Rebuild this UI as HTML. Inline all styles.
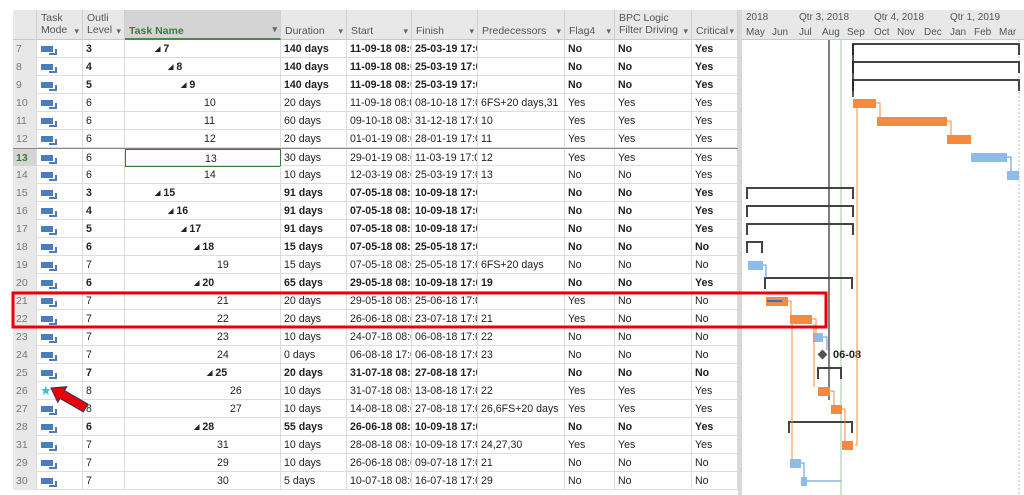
<!DOCTYPE html>
<html><head><meta charset="utf-8"><style>
*{margin:0;padding:0;box-sizing:border-box}
body{width:1024px;height:495px;background:#fff;position:relative;overflow:hidden;font-family:"Liberation Sans",sans-serif;font-size:10.6px;color:#222}
.hdr{position:absolute;top:10px;left:13px;height:30px;display:flex;background:#e8e8e8;border-bottom:1px solid #c8c8c8}
.hdr div{border-right:1px solid #d0d0d0;color:#555;font-size:10.5px;line-height:12px;padding:2px 3px 0 4px;position:relative;height:30px}
.hdr div.one{padding-top:15px}
.hdr .ar:after{content:"▾";position:absolute;right:3px;bottom:3px;font-size:9px;color:#666}
.row{position:absolute;left:13px;height:18px;display:flex;border-bottom:1px solid #dcdcdc}
.row div{height:18px;line-height:18px;border-right:1px solid #dcdcdc;padding-left:3px;white-space:nowrap;overflow:hidden}
.row div.n{background:#e8e8e8;color:#777;text-align:left;padding-left:3px;font-size:10.5px}
.b{font-weight:bold}
.t{font-size:7px;vertical-align:1px}
.ic{display:inline-block;width:12px;height:6px;background:#4a7cc2;margin-top:6px;margin-left:1px;position:relative}
.ic:after{content:"";position:absolute;right:-4px;top:3px;width:6px;height:4px;border-bottom:2px solid #4a7cc2;border-right:2px solid #4a7cc2}
.w0{width:24px}.w1{width:46px}.w2{width:42px}.w3{width:156px}.w4{width:66px}.w5{width:65px}.w6{width:66px}.w7{width:87px}.w8{width:50px}.w9{width:77px}.w10{width:46px}
</style></head><body>
<div class="hdr">
<div class="w0"></div>
<div class="w1 ar">Task<br>Mode</div>
<div class="w2 ar">Outli<br>Level</div>
<div class="w3 ar one" style="background:#d4d4d4;color:#3a7a3a;font-weight:bold;border-bottom:2px solid #4a8a4a">Task Name</div>
<div class="w4 ar one">Duration</div>
<div class="w5 ar one">Start</div>
<div class="w6 ar one">Finish</div>
<div class="w7 ar one">Predecessors</div>
<div class="w8 ar one">Flag4</div>
<div class="w9 ar">BPC Logic<br>Filter Driving</div>
<div class="w10 ar one">Critical</div>
</div>
<div style="position:absolute;left:738px;top:10px;width:4px;height:485px;background:#d8d8d8"></div>
<div style="position:absolute;left:742px;top:10px;width:282px;height:30px;background:#e8e8e8;border-bottom:1px solid #c8c8c8;font-size:10px;color:#555">
<span style="position:absolute;left:4px;top:2px">2018</span>
<span style="position:absolute;left:57px;top:2px">Qtr 3, 2018</span>
<span style="position:absolute;left:132px;top:2px">Qtr 4, 2018</span>
<span style="position:absolute;left:208px;top:2px">Qtr 1, 2019</span>
<span style="position:absolute;left:4px;top:17px">May</span><span style="position:absolute;left:30px;top:17px">Jun</span>
<span style="position:absolute;left:57px;top:17px">Jul</span><span style="position:absolute;left:80px;top:17px">Aug</span>
<span style="position:absolute;left:105px;top:17px">Sep</span><span style="position:absolute;left:132px;top:17px">Oct</span>
<span style="position:absolute;left:155px;top:17px">Nov</span><span style="position:absolute;left:182px;top:17px">Dec</span>
<span style="position:absolute;left:208px;top:17px">Jan</span><span style="position:absolute;left:232px;top:17px">Feb</span>
<span style="position:absolute;left:257px;top:17px">Mar</span>
</div>

<div class="row" style="top:40px"><div class="n w0">7</div><div class="w1"><span class="ic"></span></div><div class="w2 b">3</div><div class="w3 b" style="padding-left:30px"><span class="t">◢</span> 7</div><div class="w4 b">140 days</div><div class="w5 b">11-09-18 08:00</div><div class="w6 b">25-03-19 17:00</div><div class="w7"></div><div class="w8 b">No</div><div class="w9 b">No</div><div class="w10 b">Yes</div></div>
<div class="row" style="top:58px"><div class="n w0">8</div><div class="w1"><span class="ic"></span></div><div class="w2 b">4</div><div class="w3 b" style="padding-left:43px"><span class="t">◢</span> 8</div><div class="w4 b">140 days</div><div class="w5 b">11-09-18 08:00</div><div class="w6 b">25-03-19 17:00</div><div class="w7"></div><div class="w8 b">No</div><div class="w9 b">No</div><div class="w10 b">Yes</div></div>
<div class="row" style="top:76px"><div class="n w0">9</div><div class="w1"><span class="ic"></span></div><div class="w2 b">5</div><div class="w3 b" style="padding-left:56px"><span class="t">◢</span> 9</div><div class="w4 b">140 days</div><div class="w5 b">11-09-18 08:00</div><div class="w6 b">25-03-19 17:00</div><div class="w7"></div><div class="w8 b">No</div><div class="w9 b">No</div><div class="w10 b">Yes</div></div>
<div class="row" style="top:94px"><div class="n w0">10</div><div class="w1"><span class="ic"></span></div><div class="w2">6</div><div class="w3" style="padding-left:79px">10</div><div class="w4">20 days</div><div class="w5">11-09-18 08:00</div><div class="w6">08-10-18 17:00</div><div class="w7">6FS+20 days,31</div><div class="w8">Yes</div><div class="w9">Yes</div><div class="w10">Yes</div></div>
<div class="row" style="top:112px"><div class="n w0">11</div><div class="w1"><span class="ic"></span></div><div class="w2">6</div><div class="w3" style="padding-left:79px">11</div><div class="w4">60 days</div><div class="w5">09-10-18 08:00</div><div class="w6">31-12-18 17:00</div><div class="w7">10</div><div class="w8">Yes</div><div class="w9">Yes</div><div class="w10">Yes</div></div>
<div class="row" style="top:130px"><div class="n w0">12</div><div class="w1"><span class="ic"></span></div><div class="w2">6</div><div class="w3" style="padding-left:79px">12</div><div class="w4">20 days</div><div class="w5">01-01-19 08:00</div><div class="w6">28-01-19 17:00</div><div class="w7">11</div><div class="w8">Yes</div><div class="w9">Yes</div><div class="w10">Yes</div></div>
<div class="row" style="top:148px;border-top:1px solid #888"><div class="n w0 b" style="color:#3a7a3a;background:#d4d4d4">13</div><div class="w1"><span class="ic"></span></div><div class="w2">6</div><div class="w3" style="padding-left:79px;border:1px solid #3a7a3a">13</div><div class="w4">30 days</div><div class="w5">29-01-19 08:00</div><div class="w6">11-03-19 17:00</div><div class="w7">12</div><div class="w8">Yes</div><div class="w9">Yes</div><div class="w10">Yes</div></div>
<div class="row" style="top:166px"><div class="n w0">14</div><div class="w1"><span class="ic"></span></div><div class="w2">6</div><div class="w3" style="padding-left:79px">14</div><div class="w4">10 days</div><div class="w5">12-03-19 08:00</div><div class="w6">25-03-19 17:00</div><div class="w7">13</div><div class="w8">No</div><div class="w9">No</div><div class="w10">Yes</div></div>
<div class="row" style="top:184px"><div class="n w0">15</div><div class="w1"><span class="ic"></span></div><div class="w2 b">3</div><div class="w3 b" style="padding-left:30px"><span class="t">◢</span> 15</div><div class="w4 b">91 days</div><div class="w5 b">07-05-18 08:00</div><div class="w6 b">10-09-18 17:00</div><div class="w7"></div><div class="w8 b">No</div><div class="w9 b">No</div><div class="w10 b">Yes</div></div>
<div class="row" style="top:202px"><div class="n w0">16</div><div class="w1"><span class="ic"></span></div><div class="w2 b">4</div><div class="w3 b" style="padding-left:43px"><span class="t">◢</span> 16</div><div class="w4 b">91 days</div><div class="w5 b">07-05-18 08:00</div><div class="w6 b">10-09-18 17:00</div><div class="w7"></div><div class="w8 b">No</div><div class="w9 b">No</div><div class="w10 b">Yes</div></div>
<div class="row" style="top:220px"><div class="n w0">17</div><div class="w1"><span class="ic"></span></div><div class="w2 b">5</div><div class="w3 b" style="padding-left:56px"><span class="t">◢</span> 17</div><div class="w4 b">91 days</div><div class="w5 b">07-05-18 08:00</div><div class="w6 b">10-09-18 17:00</div><div class="w7"></div><div class="w8 b">No</div><div class="w9 b">No</div><div class="w10 b">Yes</div></div>
<div class="row" style="top:238px"><div class="n w0">18</div><div class="w1"><span class="ic"></span></div><div class="w2 b">6</div><div class="w3 b" style="padding-left:69px"><span class="t">◢</span> 18</div><div class="w4 b">15 days</div><div class="w5 b">07-05-18 08:00</div><div class="w6 b">25-05-18 17:00</div><div class="w7"></div><div class="w8 b">No</div><div class="w9 b">No</div><div class="w10 b">No</div></div>
<div class="row" style="top:256px"><div class="n w0">19</div><div class="w1"><span class="ic"></span></div><div class="w2">7</div><div class="w3" style="padding-left:92px">19</div><div class="w4">15 days</div><div class="w5">07-05-18 08:00</div><div class="w6">25-05-18 17:00</div><div class="w7">6FS+20 days</div><div class="w8">No</div><div class="w9">No</div><div class="w10">No</div></div>
<div class="row" style="top:274px"><div class="n w0">20</div><div class="w1"><span class="ic"></span></div><div class="w2 b">6</div><div class="w3 b" style="padding-left:69px"><span class="t">◢</span> 20</div><div class="w4 b">65 days</div><div class="w5 b">29-05-18 08:00</div><div class="w6 b">10-09-18 17:00</div><div class="w7 b">19</div><div class="w8 b">No</div><div class="w9 b">No</div><div class="w10 b">Yes</div></div>
<div class="row" style="top:292px"><div class="n w0">21</div><div class="w1"><span class="ic"></span></div><div class="w2">7</div><div class="w3" style="padding-left:92px">21</div><div class="w4">20 days</div><div class="w5">29-05-18 08:00</div><div class="w6">25-06-18 17:00</div><div class="w7"></div><div class="w8">Yes</div><div class="w9">No</div><div class="w10">No</div></div>
<div class="row" style="top:310px"><div class="n w0">22</div><div class="w1"><span class="ic"></span></div><div class="w2">7</div><div class="w3" style="padding-left:92px">22</div><div class="w4">20 days</div><div class="w5">26-06-18 08:00</div><div class="w6">23-07-18 17:00</div><div class="w7">21</div><div class="w8">Yes</div><div class="w9">No</div><div class="w10">No</div></div>
<div class="row" style="top:328px"><div class="n w0">23</div><div class="w1"><span class="ic"></span></div><div class="w2">7</div><div class="w3" style="padding-left:92px">23</div><div class="w4">10 days</div><div class="w5">24-07-18 08:00</div><div class="w6">06-08-18 17:00</div><div class="w7">22</div><div class="w8">No</div><div class="w9">No</div><div class="w10">No</div></div>
<div class="row" style="top:346px"><div class="n w0">24</div><div class="w1"><span class="ic"></span></div><div class="w2">7</div><div class="w3" style="padding-left:92px">24</div><div class="w4">0 days</div><div class="w5">06-08-18 17:00</div><div class="w6">06-08-18 17:00</div><div class="w7">23</div><div class="w8">No</div><div class="w9">No</div><div class="w10">No</div></div>
<div class="row" style="top:364px"><div class="n w0">25</div><div class="w1"><span class="ic"></span></div><div class="w2 b">7</div><div class="w3 b" style="padding-left:82px"><span class="t">◢</span> 25</div><div class="w4 b">20 days</div><div class="w5 b">31-07-18 08:00</div><div class="w6 b">27-08-18 17:00</div><div class="w7"></div><div class="w8 b">No</div><div class="w9 b">No</div><div class="w10 b">No</div></div>
<div class="row" style="top:382px"><div class="n w0">26</div><div class="w1"><span style="color:#3cc0c8;font-size:13px">★</span></div><div class="w2">8</div><div class="w3" style="padding-left:105px">26</div><div class="w4">10 days</div><div class="w5">31-07-18 08:00</div><div class="w6">13-08-18 17:00</div><div class="w7">22</div><div class="w8">Yes</div><div class="w9">Yes</div><div class="w10">Yes</div></div>
<div class="row" style="top:400px"><div class="n w0">27</div><div class="w1"><span class="ic"></span></div><div class="w2">8</div><div class="w3" style="padding-left:105px">27</div><div class="w4">10 days</div><div class="w5">14-08-18 08:00</div><div class="w6">27-08-18 17:00</div><div class="w7">26,6FS+20 days</div><div class="w8">Yes</div><div class="w9">Yes</div><div class="w10">Yes</div></div>
<div class="row" style="top:418px"><div class="n w0">28</div><div class="w1"><span class="ic"></span></div><div class="w2 b">6</div><div class="w3 b" style="padding-left:69px"><span class="t">◢</span> 28</div><div class="w4 b">55 days</div><div class="w5 b">26-06-18 08:00</div><div class="w6 b">10-09-18 17:00</div><div class="w7"></div><div class="w8 b">No</div><div class="w9 b">No</div><div class="w10 b">Yes</div></div>
<div class="row" style="top:436px"><div class="n w0">31</div><div class="w1"><span class="ic"></span></div><div class="w2">7</div><div class="w3" style="padding-left:92px">31</div><div class="w4">10 days</div><div class="w5">28-08-18 08:00</div><div class="w6">10-09-18 17:00</div><div class="w7">24,27,30</div><div class="w8">Yes</div><div class="w9">Yes</div><div class="w10">Yes</div></div>
<div class="row" style="top:454px"><div class="n w0">29</div><div class="w1"><span class="ic"></span></div><div class="w2">7</div><div class="w3" style="padding-left:92px">29</div><div class="w4">10 days</div><div class="w5">26-06-18 08:00</div><div class="w6">09-07-18 17:00</div><div class="w7">21</div><div class="w8">No</div><div class="w9">No</div><div class="w10">No</div></div>
<div class="row" style="top:472px"><div class="n w0">30</div><div class="w1"><span class="ic"></span></div><div class="w2">7</div><div class="w3" style="padding-left:92px">30</div><div class="w4">5 days</div><div class="w5">10-07-18 08:00</div><div class="w6">16-07-18 17:00</div><div class="w7">29</div><div class="w8">No</div><div class="w9">No</div><div class="w10">No</div></div>

<svg width="1024" height="495" style="position:absolute;left:0;top:0">
<line x1="1019" y1="40" x2="1019" y2="495" stroke="#bbb" stroke-dasharray="2,2"/>
<line x1="829" y1="40" x2="829" y2="400" stroke="#555" stroke-width="1.5"/>
<line x1="841" y1="40" x2="841" y2="495" stroke="#9c9" stroke-width="1"/>
<g fill="none" stroke="#444" stroke-width="2">
<path d="M853 55V44H1019V55"/><path d="M853 73V62H1019V73"/><path d="M853 91V80H1019V91"/>
<path d="M747 199V188H853V199"/><path d="M747 217V206H853V217"/><path d="M747 235V224H853V235"/>
<path d="M747 253V242H762V253"/><path d="M765 289V278H852V289"/><path d="M818 379V368H841V379"/><path d="M789 433V422H852V433"/>
</g>
<line x1="853" y1="44" x2="853" y2="97" stroke="#222" stroke-width="1.5"/>
<g fill="#f58a3e">
<rect x="853" y="99" width="23" height="9"/><rect x="877" y="117" width="70" height="9"/><rect x="947" y="135" width="24" height="9"/>
<rect x="766" y="297" width="22" height="9"/><rect x="790" y="315" width="22" height="9"/><rect x="818" y="387" width="12" height="9"/><rect x="831" y="405" width="11" height="9"/><rect x="842" y="441" width="11" height="9"/>
</g>
<rect x="767" y="300" width="15" height="2" fill="#3a6fc0"/>
<g fill="#8fbbea">
<rect x="971" y="153" width="36" height="9"/><rect x="1007" y="171" width="12" height="9"/><rect x="748" y="261" width="15" height="9"/><rect x="813" y="333" width="10" height="9"/><rect x="790" y="459" width="11" height="9"/><rect x="801" y="477" width="6" height="9"/>
</g>
<rect x="819" y="351" width="7" height="7" fill="#555" transform="rotate(45 822.5 354.5)"/>
<text x="833" y="358" font-family="Liberation Sans" font-size="11" font-weight="bold" fill="#222">06-08</text>
<g fill="none" stroke="#f58a3e" stroke-width="1">
<path d="M876 103H880V117"/><path d="M947 121H951V135"/><path d="M855 445H857V99"/>
<path d="M788 301H791V315"/><path d="M812 319H816V333"/><path d="M792 324V459"/><path d="M814 324V387"/><path d="M830 391H834V405"/><path d="M842 409H845V441"/>
</g>
<g fill="none" stroke="#5a90d8" stroke-width="1"><path d="M1007 157H1011V171"/><path d="M763 265H766V278"/><path d="M823 337H827V350"/><path d="M801 463H804V477"/><path d="M807 481H841"/></g>
<rect x="13" y="293" width="813" height="34" fill="none" stroke="#e8000b" stroke-width="3"/>
<g transform="translate(51,388) rotate(210)">
<polygon points="0,0 -13,-9 -13,-4.5 -40,-4.5 -40,4.5 -13,4.5 -13,9" fill="#e8000b" stroke="#2a3550" stroke-width="1"/>
</g>
</svg>
</body></html>
